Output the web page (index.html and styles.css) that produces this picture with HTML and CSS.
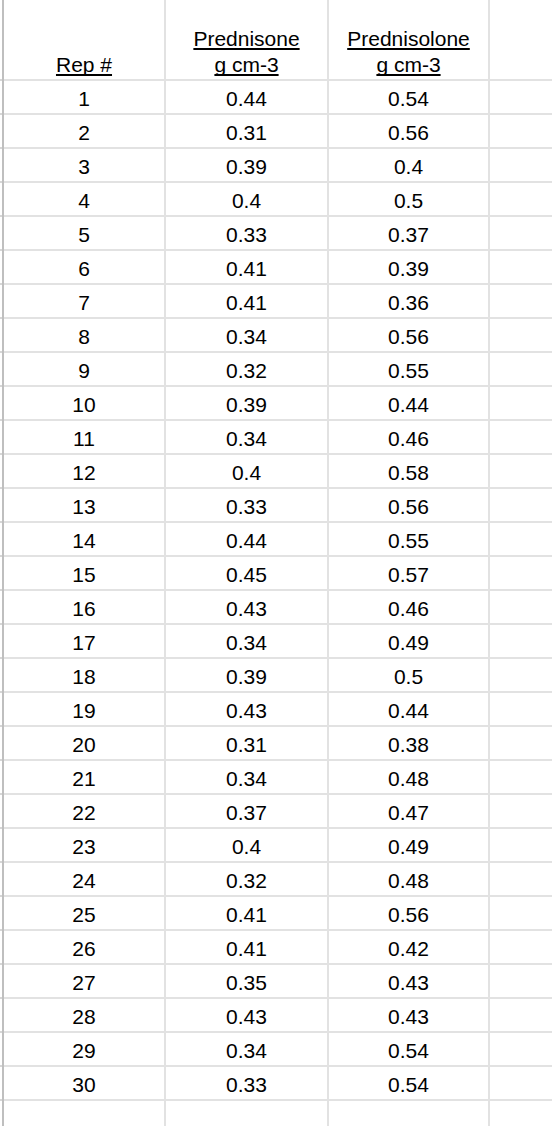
FILE: index.html
```html
<!DOCTYPE html>
<html>
<head>
<meta charset="utf-8">
<link rel="stylesheet" href="styles.css">
</head>
<body>
<div class="sheet">
  <div class="row head">
    <div class="gutter"></div><div class="edge"></div>
    <div class="cell"><u>Rep #</u></div>
    <div class="cell two"><u>Prednisone</u><u>g cm-3</u></div>
    <div class="cell two"><u>Prednisolone</u><u>g cm-3</u></div>
    <div class="cell last"></div>
  </div>
  <div class="row"><div class="gutter"></div><div class="edge"></div><div class="cell">1</div><div class="cell">0.44</div><div class="cell">0.54</div><div class="cell last"></div></div>
  <div class="row"><div class="gutter"></div><div class="edge"></div><div class="cell">2</div><div class="cell">0.31</div><div class="cell">0.56</div><div class="cell last"></div></div>
  <div class="row"><div class="gutter"></div><div class="edge"></div><div class="cell">3</div><div class="cell">0.39</div><div class="cell">0.4</div><div class="cell last"></div></div>
  <div class="row"><div class="gutter"></div><div class="edge"></div><div class="cell">4</div><div class="cell">0.4</div><div class="cell">0.5</div><div class="cell last"></div></div>
  <div class="row"><div class="gutter"></div><div class="edge"></div><div class="cell">5</div><div class="cell">0.33</div><div class="cell">0.37</div><div class="cell last"></div></div>
  <div class="row"><div class="gutter"></div><div class="edge"></div><div class="cell">6</div><div class="cell">0.41</div><div class="cell">0.39</div><div class="cell last"></div></div>
  <div class="row"><div class="gutter"></div><div class="edge"></div><div class="cell">7</div><div class="cell">0.41</div><div class="cell">0.36</div><div class="cell last"></div></div>
  <div class="row"><div class="gutter"></div><div class="edge"></div><div class="cell">8</div><div class="cell">0.34</div><div class="cell">0.56</div><div class="cell last"></div></div>
  <div class="row"><div class="gutter"></div><div class="edge"></div><div class="cell">9</div><div class="cell">0.32</div><div class="cell">0.55</div><div class="cell last"></div></div>
  <div class="row"><div class="gutter"></div><div class="edge"></div><div class="cell">10</div><div class="cell">0.39</div><div class="cell">0.44</div><div class="cell last"></div></div>
  <div class="row"><div class="gutter"></div><div class="edge"></div><div class="cell">11</div><div class="cell">0.34</div><div class="cell">0.46</div><div class="cell last"></div></div>
  <div class="row"><div class="gutter"></div><div class="edge"></div><div class="cell">12</div><div class="cell">0.4</div><div class="cell">0.58</div><div class="cell last"></div></div>
  <div class="row"><div class="gutter"></div><div class="edge"></div><div class="cell">13</div><div class="cell">0.33</div><div class="cell">0.56</div><div class="cell last"></div></div>
  <div class="row"><div class="gutter"></div><div class="edge"></div><div class="cell">14</div><div class="cell">0.44</div><div class="cell">0.55</div><div class="cell last"></div></div>
  <div class="row"><div class="gutter"></div><div class="edge"></div><div class="cell">15</div><div class="cell">0.45</div><div class="cell">0.57</div><div class="cell last"></div></div>
  <div class="row"><div class="gutter"></div><div class="edge"></div><div class="cell">16</div><div class="cell">0.43</div><div class="cell">0.46</div><div class="cell last"></div></div>
  <div class="row"><div class="gutter"></div><div class="edge"></div><div class="cell">17</div><div class="cell">0.34</div><div class="cell">0.49</div><div class="cell last"></div></div>
  <div class="row"><div class="gutter"></div><div class="edge"></div><div class="cell">18</div><div class="cell">0.39</div><div class="cell">0.5</div><div class="cell last"></div></div>
  <div class="row"><div class="gutter"></div><div class="edge"></div><div class="cell">19</div><div class="cell">0.43</div><div class="cell">0.44</div><div class="cell last"></div></div>
  <div class="row"><div class="gutter"></div><div class="edge"></div><div class="cell">20</div><div class="cell">0.31</div><div class="cell">0.38</div><div class="cell last"></div></div>
  <div class="row"><div class="gutter"></div><div class="edge"></div><div class="cell">21</div><div class="cell">0.34</div><div class="cell">0.48</div><div class="cell last"></div></div>
  <div class="row"><div class="gutter"></div><div class="edge"></div><div class="cell">22</div><div class="cell">0.37</div><div class="cell">0.47</div><div class="cell last"></div></div>
  <div class="row"><div class="gutter"></div><div class="edge"></div><div class="cell">23</div><div class="cell">0.4</div><div class="cell">0.49</div><div class="cell last"></div></div>
  <div class="row"><div class="gutter"></div><div class="edge"></div><div class="cell">24</div><div class="cell">0.32</div><div class="cell">0.48</div><div class="cell last"></div></div>
  <div class="row"><div class="gutter"></div><div class="edge"></div><div class="cell">25</div><div class="cell">0.41</div><div class="cell">0.56</div><div class="cell last"></div></div>
  <div class="row"><div class="gutter"></div><div class="edge"></div><div class="cell">26</div><div class="cell">0.41</div><div class="cell">0.42</div><div class="cell last"></div></div>
  <div class="row"><div class="gutter"></div><div class="edge"></div><div class="cell">27</div><div class="cell">0.35</div><div class="cell">0.43</div><div class="cell last"></div></div>
  <div class="row"><div class="gutter"></div><div class="edge"></div><div class="cell">28</div><div class="cell">0.43</div><div class="cell">0.43</div><div class="cell last"></div></div>
  <div class="row"><div class="gutter"></div><div class="edge"></div><div class="cell">29</div><div class="cell">0.34</div><div class="cell">0.54</div><div class="cell last"></div></div>
  <div class="row"><div class="gutter"></div><div class="edge"></div><div class="cell">30</div><div class="cell">0.33</div><div class="cell">0.54</div><div class="cell last"></div></div>
  <div class="row tail"><div class="gutter"></div><div class="edge"></div><div class="cell"></div><div class="cell"></div><div class="cell"></div><div class="cell last"></div></div>
</div>
</body>
</html>
```

FILE: styles.css
```css
html, body {
  margin: 0;
  padding: 0;
  background: #ffffff;
}

.sheet {
  width: 552px;
  height: 1126px;
  overflow: hidden;
  font-family: "Liberation Sans", Arial, sans-serif;
  font-size: 21px;
  color: #000000;
  display: flex;
  flex-direction: column;
}

.row {
  display: grid;
  grid-template-columns: 2px 2px 162px 163px 161px 1fr;
  height: 34px;
  flex: none;
}

.row.head {
  height: 81px;
}

.row.tail {
  flex: 1 1 auto;
}

.gutter {
  border-bottom: 2px solid #d6d6d6;
}

.edge {
  background: #bfbfbf;
}

.cell {
  box-sizing: border-box;
  border-right: 2px solid #e2e2e2;
  border-bottom: 2px solid #e2e2e2;
  display: flex;
  flex-direction: column;
  align-items: center;
  justify-content: flex-end;
  text-align: center;
  line-height: 24px;
  padding-bottom: 2px;
}

.cell u {
  text-decoration-skip-ink: none;
  text-decoration-thickness: 1.5px;
  text-underline-offset: 2px;
}

.cell.two {
  line-height: 26px;
  padding-bottom: 1px;
}

.cell.two u {
  display: block;
}

.cell.last {
  border-right: none;
}

.tail .cell,
.tail .gutter {
  border-bottom: none;
}
```
